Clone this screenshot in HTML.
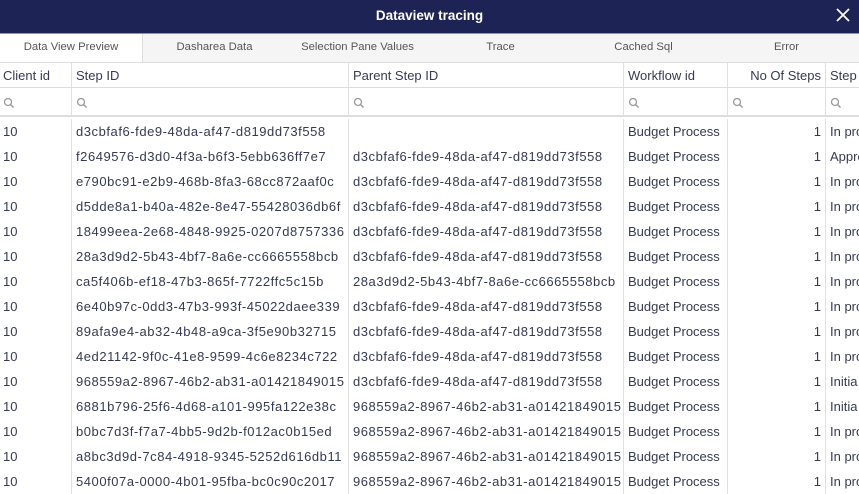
<!DOCTYPE html>
<html><head><meta charset="utf-8"><style>
*{margin:0;padding:0;box-sizing:border-box}
body{width:859px;height:478px;overflow:hidden;background:#fff;font-family:"Liberation Sans",sans-serif;color:#343a52;position:relative}
.hd{position:absolute;left:0;top:0;width:859px;height:34px;background:#1e2355;color:#fff;font-weight:bold;font-size:13.5px;text-align:center;line-height:32px;border-bottom:1px solid #8c93b8}
.x{position:absolute;right:8px;top:7px}
.tabs{position:absolute;top:34px;left:0;width:859px;height:29px;background:#f5f5f5;border-bottom:1px solid #ddd}
.tab{position:absolute;top:0;height:28px;width:143px;text-align:center;font-size:11.3px;line-height:26px;color:#555}
.tab.a{background:#fff;border-right:1px solid #ddd}
.row{position:absolute;left:0;width:859px;height:25px;font-size:13px}
.c{position:absolute;top:0;height:100%;padding-left:4px;white-space:nowrap;overflow:hidden;line-height:25px;border-left:1px solid #e0e0e0}
.hr{top:63px;border-bottom:1px solid #ddd;height:25px}
.fr{top:88px;height:29px;border-bottom:2px solid #ddd}
.fr .c{line-height:27px}
.r{text-align:right;padding-right:4px}
.id{letter-spacing:0.55px}
</style></head><body>
<div class="hd">Dataview tracing<svg class="x" width="16" height="16" viewBox="0 0 16 16"><path d="M2 2L14 14M14 2L2 14" stroke="#fff" stroke-width="1.8"/></svg></div>
<div class="tabs">
<div class="tab a" style="left:0;width:143px">Data View Preview</div>
<div class="tab" style="left:143px">Dasharea Data</div>
<div class="tab" style="left:286px">Selection Pane Values</div>
<div class="tab" style="left:429px">Trace</div>
<div class="tab" style="left:572px">Cached Sql</div>
<div class="tab" style="left:715px">Error</div>
</div>
<div id="t"></div>
<script>
const cols=[[0,71],[71,277],[348,275],[623,104],[727,98],[825,40]];
function cell(i,txt,cls){return `<div class="c ${cls||''}" style="left:${cols[i][0]}px;width:${cols[i][1]}px;${i==0?'border-left:none;padding-left:3px;':''}">${txt}</div>`}
const mag='<svg width="12" height="12" viewBox="0 0 12 12" style="vertical-align:middle"><circle cx="5" cy="5" r="3.5" fill="none" stroke="#999" stroke-width="1.3"/><path d="M7.6 7.6L10.5 10.5" stroke="#999" stroke-width="1.5"/></svg>';
let h='<div class="row hr">'+cell(0,'Client id')+cell(1,'Step ID')+cell(2,'Parent Step ID')+cell(3,'Workflow id')+cell(4,'No Of Steps','r')+cell(5,'Step')+'</div>';
h+='<div class="row fr">';for(let i=0;i<6;i++)h+=cell(i,mag);h+='</div>';
const P='d3cbfaf6-fde9-48da-af47-d819dd73f558',Q='968559a2-8967-46b2-ab31-a01421849015';
const d=[['d3cbfaf6-fde9-48da-af47-d819dd73f558','','In pro'],['f2649576-d3d0-4f3a-b6f3-5ebb636ff7e7',P,'Appro'],['e790bc91-e2b9-468b-8fa3-68cc872aaf0c',P,'In pro'],['d5dde8a1-b40a-482e-8e47-55428036db6f',P,'In pro'],['18499eea-2e68-4848-9925-0207d8757336',P,'In pro'],['28a3d9d2-5b43-4bf7-8a6e-cc6665558bcb',P,'In pro'],['ca5f406b-ef18-47b3-865f-7722ffc5c15b','28a3d9d2-5b43-4bf7-8a6e-cc6665558bcb','In pro'],['6e40b97c-0dd3-47b3-993f-45022daee339',P,'In pro'],['89afa9e4-ab32-4b48-a9ca-3f5e90b32715',P,'In pro'],['4ed21142-9f0c-41e8-9599-4c6e8234c722',P,'In pro'],['968559a2-8967-46b2-ab31-a01421849015',P,'Initia'],['6881b796-25f6-4d68-a101-995fa122e38c',Q,'Initia'],['b0bc7d3f-f7a7-4bb5-9d2b-f012ac0b15ed',Q,'In pro'],['a8bc3d9d-7c84-4918-9345-5252d616db11',Q,'In pro'],['5400f07a-0000-4b01-95fba-bc0c90c2017',Q,'In pro']];
d.forEach((r,k)=>{h+=`<div class="row" style="top:${119+k*25}px">`+cell(0,'10')+cell(1,r[0],'id')+cell(2,r[1],'id')+cell(3,'Budget Process')+cell(4,'1','r')+cell(5,r[2])+'</div>'});
document.getElementById('t').innerHTML=h;
</script>
</body></html>
